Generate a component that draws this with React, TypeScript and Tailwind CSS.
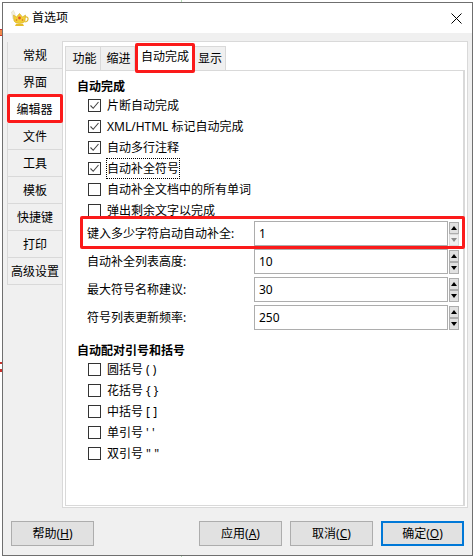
import React from "react";

const font = { fontFamily: '"Noto Sans", "Noto Sans CJK SC", sans-serif' };

const sideTabs = ["常规", "界面", "编辑器", "文件", "工具", "模板", "快捷键", "打印", "高级设置"];

const topChecks = [
  { label: "片断自动完成", on: true },
  { label: "XML/HTML 标记自动完成", on: true },
  { label: "自动多行注释", on: true },
  { label: "自动补全符号", on: true, focus: true },
  { label: "自动补全文档中的所有单词", on: false },
  { label: "弹出剩余文字以完成", on: false },
];

const fields = [
  { label: "键入多少字符启动自动补全:", value: "1", highlight: true },
  { label: "自动补全列表高度:", value: "10" },
  { label: "最大符号名称建议:", value: "30" },
  { label: "符号列表更新频率:", value: "250" },
];

const pairChecks = ["圆括号 ( )", "花括号 { }", "中括号 [ ]", "单引号 ' '", '双引号 " "'];

function RedBox({ className }: { className: string }) {
  return <span className={`absolute border-[3px] border-[#fb1a1a] rounded-[2px] pointer-events-none ${className}`} />;
}

function AppIcon() {
  return (
    <svg width="18" height="17" viewBox="0 0 18 17" className="shrink-0">
      {/* plume */}
      <path d="M0.5 2 L2.5 0.5 L4 4 L4.5 9 L2 9 Z" fill="#f4f0e2" stroke="#d8d2b4" strokeWidth="0.5" />
      {/* handle */}
      <path d="M14 7 Q17.5 6.5 17 9.5 Q16.5 12 13.5 12" fill="none" stroke="#e0b92a" strokeWidth="1.2" />
      {/* cup */}
      <path d="M2.5 5 L5.5 7 L8.5 3.5 L11.5 7 L14.5 5 L14 11 Q12.5 13.5 8.5 13.5 Q4.5 13.5 3 11 Z" fill="#f2cf36" stroke="#d3a91e" strokeWidth="0.6" />
      <path d="M5 14 H12 L13 16 H4 Z" fill="#e6bd2c" />
      <circle cx="8.5" cy="8" r="1.4" fill="#e0562c" />
      <circle cx="5.5" cy="10" r="0.8" fill="#d8632e" />
      <circle cx="11.5" cy="10" r="0.8" fill="#d8632e" />
    </svg>
  );
}

function CheckRow({ label, on, focus }: { label: string; on?: boolean; focus?: boolean }) {
  return (
    <div className="flex items-center h-[21px] pl-[11px]">
      <span className="w-[13px] h-[13px] border border-[#333333] bg-white flex items-center justify-center shrink-0">
        {on && (
          <svg width="11" height="11" viewBox="0 0 11 11">
            <path d="M1.5 5.5 L4.2 8.3 L9.5 2" fill="none" stroke="#444444" strokeWidth="1.1" />
          </svg>
        )}
      </span>
      <span
        className={
          focus
            ? "ml-[5px] px-[1px] h-[21px] flex items-center outline-1 outline-dotted outline-black -outline-offset-1"
            : "ml-[6px]"
        }
      >
        {label}
      </span>
    </div>
  );
}

function SpinButton({ up, disabled }: { up?: boolean; disabled?: boolean }) {
  return (
    <span
      className={`w-[10px] h-[12px] border flex items-center justify-center ${
        disabled ? "bg-[#efefef] border-[#d9d9d9]" : "bg-[#e1e1e1] border-[#adadad]"
      }`}
    >
      <svg width="6" height="4" viewBox="0 0 6 4">
        <path d={up ? "M3 0 L6 4 H0 Z" : "M0 0 H6 L3 4 Z"} fill={disabled ? "#8a8a8a" : "#000000"} />
      </svg>
    </span>
  );
}

function FieldRow({ label, value, highlight }: { label: string; value: string; highlight?: boolean }) {
  return (
    <div className="relative flex items-center h-[25px] pl-[21px]">
      <span className="w-[167px] shrink-0">{label}</span>
      <div className="w-[194px] h-[25px] border border-[#adadad] bg-white flex items-center pl-[4px] shrink-0">{value}</div>
      <div className="ml-[1px] flex flex-col">
        <SpinButton up />
        <SpinButton disabled={highlight} />
      </div>
      {highlight && <RedBox className="left-[14px] top-[-5px] w-[385px] h-[33px]" />}
    </div>
  );
}

function Btn({ text, hot, primary }: { text: string; hot: string; primary?: boolean }) {
  return (
    <button
      className={`w-[83px] h-[25px] bg-[#e1e1e1] flex items-center justify-center text-[12px] text-black ${
        primary ? "border-2 border-[#0078d7]" : "border border-[#adadad]"
      }`}
    >
      {text}(<u>{hot}</u>)
    </button>
  );
}

export default function App() {
  return (
    <div className="relative w-[475px] h-[557px] bg-white overflow-hidden text-[12px] leading-none text-black" style={font}>
      {/* bits of the desktop behind the window */}
      <span className="absolute left-0 top-[29px] w-[2px] h-[7px] bg-[#f08a4a] border-y border-[#d0342c]" />
      <span className="absolute left-0 top-[362px] w-[2px] h-[2px] bg-[#c8322c]" />
      <span className="absolute left-0 top-[369px] w-[2px] h-[3px] bg-[#c8322c]" />
      <span className="absolute left-[181px] top-0 w-px h-[2px] bg-[#b7e0b7]" />
      <span className="absolute left-[181px] bottom-0 w-px h-[1px] bg-[#b7e0b7]" />

      <div className="w-[471px] h-[554px] ml-[2px] translate-y-[2px] border border-[#6f6f6f] flex flex-col bg-white">
        {/* Title bar */}
        <div className="h-[30px] shrink-0 flex items-center pl-[8px] pr-[10px]">
          <AppIcon />
          <span className="ml-[3px]">首选项</span>
          <svg width="11" height="11" viewBox="0 0 11 11" className="ml-auto">
            <path d="M0.5 0.5 L10.5 10.5 M10.5 0.5 L0.5 10.5" stroke="#000000" strokeWidth="1" />
          </svg>
        </div>

        <div className="flex-1 bg-[#f0f0f0] flex flex-col">
          <div className="flex pt-[8px] pl-[4px] pr-[4px]">
            {/* Side tabs */}
            <div className="w-[55px] shrink-0 pt-[1px] flex flex-col">
              {sideTabs.map((t) => (
                <div
                  key={t}
                  className={
                    t === "编辑器"
                      ? "relative h-[27px] pt-[1px] bg-white flex items-center justify-center"
                      : "h-[27px] pt-[2px] border-l border-b border-[#d9d9d9] flex items-center justify-center"
                  }
                >
                  {t}
                  {t === "编辑器" && <RedBox className="left-0 top-[-2px] w-[56px] h-[29px]" />}
                </div>
              ))}
            </div>

            {/* Panel */}
            <div className="w-[407px] h-[467px] bg-white border border-[#d9d9d9] px-[2px] pt-[3px] pb-[1px] flex flex-col">
              <div className="flex items-end h-[25px] shrink-0">
                <div className="w-[36px] h-[24px] pl-[3px] bg-[#f0f0f0] border border-b-0 border-[#d9d9d9] flex items-center justify-center">功能</div>
                <div className="w-[34px] h-[24px] pl-[2px] bg-[#f0f0f0] border-t border-r border-[#d9d9d9] flex items-center justify-center">缩进</div>
                <div className="relative w-[60px] h-[26px] bg-white flex items-center justify-center">
                  自动完成
                  <RedBox className="left-0 top-[-1px] w-[60px] h-[30px]" />
                </div>
                <div className="w-[31px] h-[24px] bg-[#f0f0f0] border-t border-r border-[#d9d9d9] flex items-center justify-center">显示</div>
              </div>

              <div className="flex-1 border border-r-2 border-[#d9d9d9] pt-[7px] pl-[11px]">
                <div className="h-[17px] flex items-center font-bold">自动完成</div>
                {topChecks.map((c) => (
                  <CheckRow key={c.label} label={c.label} on={c.on} focus={c.focus} />
                ))}
                <div className="flex flex-col gap-[3px] -ml-[11px]">
                  {fields.map((f) => (
                    <FieldRow key={f.label} label={f.label} value={f.value} highlight={f.highlight} />
                  ))}
                </div>
                <div className="mt-[12px] h-[17px] flex items-center font-bold">自动配对引号和括号</div>
                {pairChecks.map((c) => (
                  <CheckRow key={c} label={c} />
                ))}
              </div>
            </div>
          </div>

          {/* Footer */}
          <div className="flex justify-between pl-[8px] pr-[8px] mt-[13px]">
            <Btn text="帮助" hot="H" />
            <div className="flex gap-[8px]">
              <Btn text="应用" hot="A" />
              <Btn text="取消" hot="C" />
              <Btn text="确定" hot="O" primary />
            </div>
          </div>
        </div>
      </div>
    </div>
  );
}
